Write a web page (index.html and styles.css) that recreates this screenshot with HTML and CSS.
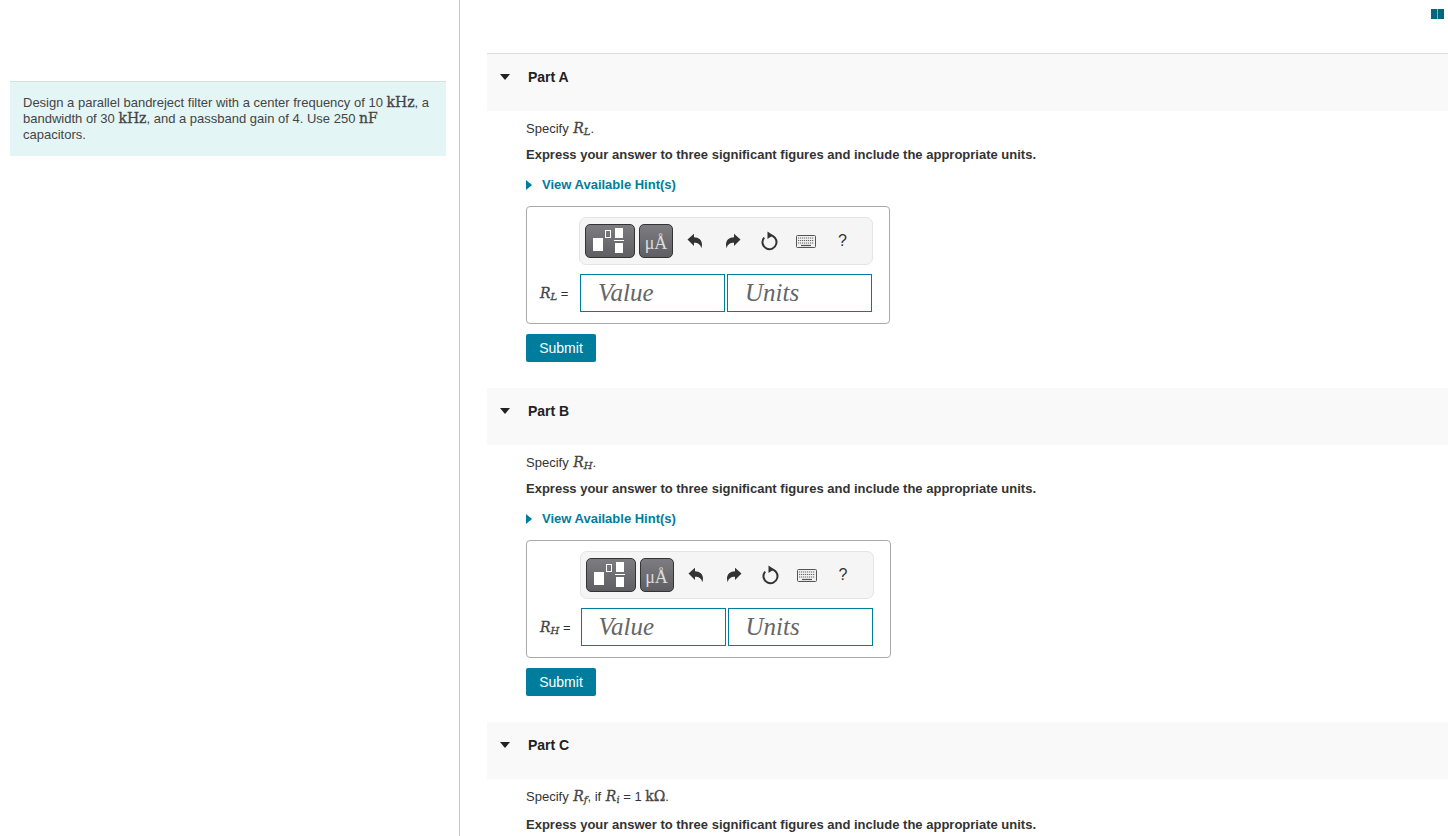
FILE: index.html
```html
<!DOCTYPE html>
<html lang="en">
<head>
  <meta charset="UTF-8" />
  <title>Parallel bandreject filter</title>
  <link rel="stylesheet" href="styles.css">
</head>
<body>
  <svg class="defs" width="0" height="0" aria-hidden="true">
    <symbol id="undo" viewBox="0 0 16 16"><path d="M.5 6.500 7 .8v3.500c4.800 0 8 2.900 8 7.500 0 1.300-.3 2.400-.8 3.400-.5-3.500-2.900-5.400-7.200-5.400v3.300z"/></symbol>
    <symbol id="redo" viewBox="0 0 16 16"><path d="M15.500 6.500 9 .8v3.500c-4.800 0-8 2.900-8 7.500 0 1.300.3 2.400.8 3.400.5-3.500 2.900-5.400 7.200-5.400v3.300z"/></symbol>
    <symbol id="reset" viewBox="0 0 18 20"><path d="M9.500 4.200a7 7 0 1 1-5.300 2.400" fill="none" stroke="currentColor" stroke-width="2"/><path d="M7.500 0.500 13 4.200 7.500 8z"/></symbol>
    <symbol id="keyboard" viewBox="0 0 20 13">
      <rect x="0.500" y="0.500" width="19" height="12" rx="1" fill="#f0f0f0" stroke="#555"/>
      <path d="M2 3h16M2 5.500h16M2 8h16" stroke="#666" stroke-width="1.200" stroke-dasharray="1.200 .8"/>
      <path d="M5 10.500h10" stroke="#555" stroke-width="1.200"/>
    </symbol>
    <symbol id="templates" viewBox="0 0 50 34">
      <rect x="8" y="14" width="10" height="13" fill="#fff"/>
      <rect x="20.500" y="6.500" width="5" height="7" fill="none" stroke="#fff"/>
      <rect x="30" y="4" width="8" height="10" fill="#fff"/>
      <rect x="29" y="16" width="10" height="1" fill="#fff"/>
      <rect x="30" y="19" width="8" height="10" fill="#fff"/>
    </symbol>
  </svg>

  <div class="page">
    <aside class="side">
      <div class="intro">
        <span class="line">Design a parallel bandreject filter with a center frequency of 10 <span class="unit">kHz</span>, a</span>
        <span class="line">bandwidth of 30 <span class="unit">kHz</span>, and a passband gain of 4. Use 250 <span class="unit">nF</span></span>
        <span class="line">capacitors.</span>
      </div>
    </aside>

    <main class="main">
      <div class="topbar">
        <svg class="book" width="13" height="10" viewBox="0 0 13 10" aria-hidden="true">
          <rect width="6" height="10" fill="#00687f"/>
          <rect x="7" width="6" height="10" fill="#00687f"/>
          <rect x="6" width="1" height="10" fill="#7fb3bf"/>
        </svg>
      </div>

      <section class="part">
        <h2 class="part-head"><span class="caret"></span>Part A</h2>
        <div class="part-body">
          <p class="prompt">Specify <span class="var">R<sub>L</sub></span>.</p>
          <p class="instr">Express your answer to three significant figures and include the appropriate units.</p>
          <p class="hint"><span class="hint-arrow"></span>View Available Hint(s)</p>
          <div class="answer">
            <div class="toolbar">
              <span class="tool tool-wide"><svg width="50" height="34"><use href="#templates"/></svg></span>
              <span class="tool tool-unit">μÅ</span>
              <svg class="ic ic-undo"><use href="#undo"/></svg>
              <svg class="ic ic-redo"><use href="#redo"/></svg>
              <svg class="ic ic-reset"><use href="#reset"/></svg>
              <svg class="ic ic-keys"><use href="#keyboard"/></svg>
              <span class="ic-help">?</span>
            </div>
            <label class="entry-label"><span class="var">R<sub>L</sub></span> =</label>
            <div class="field">Value</div>
            <div class="field">Units</div>
          </div>
          <button class="submit">Submit</button>
        </div>
      </section>

      <section class="part">
        <h2 class="part-head"><span class="caret"></span>Part B</h2>
        <div class="part-body">
          <p class="prompt">Specify <span class="var">R<sub>H</sub></span>.</p>
          <p class="instr">Express your answer to three significant figures and include the appropriate units.</p>
          <p class="hint"><span class="hint-arrow"></span>View Available Hint(s)</p>
          <div class="answer">
            <div class="toolbar">
              <span class="tool tool-wide"><svg width="50" height="34"><use href="#templates"/></svg></span>
              <span class="tool tool-unit">μÅ</span>
              <svg class="ic ic-undo"><use href="#undo"/></svg>
              <svg class="ic ic-redo"><use href="#redo"/></svg>
              <svg class="ic ic-reset"><use href="#reset"/></svg>
              <svg class="ic ic-keys"><use href="#keyboard"/></svg>
              <span class="ic-help">?</span>
            </div>
            <label class="entry-label"><span class="var">R<sub>H</sub></span> =</label>
            <div class="field">Value</div>
            <div class="field">Units</div>
          </div>
          <button class="submit">Submit</button>
        </div>
      </section>

      <section class="part part-last">
        <h2 class="part-head"><span class="caret"></span>Part C</h2>
        <div class="part-body">
          <p class="prompt">Specify <span class="var">R<sub>f</sub></span>, if <span class="var">R<sub>i</sub></span> = 1 <span class="unit">kΩ</span>.</p>
          <p class="instr">Express your answer to three significant figures and include the appropriate units.</p>
        </div>
      </section>
    </main>
  </div>
</body>
</html>
```

FILE: styles.css
```css
* { box-sizing: border-box; }
html, body { margin: 0; height: 100%; overflow: hidden; background: #fff; }
body { font-family: "Liberation Sans", Arial, sans-serif; font-size: 13px; color: #333; }
.defs { position: absolute; }

.page { display: flex; height: 836px; overflow: hidden; }
.side { width: 460px; flex: none; border-right: 1px solid #c5cbd3; padding: 81px 13px 0 10px; }
.intro { background: #e4f5f6; border-top: 1px solid #d3e0e4; padding: 13px; height: 75px; line-height: 16px; color: #444; }
.line { display: block; height: 16px; white-space: nowrap; }
.unit { font-family: "DejaVu Serif", serif; font-size: 14px; line-height: 14px; color: #444; -webkit-text-stroke: .3px #444; }
.var { font-family: "DejaVu Serif", serif; font-style: italic; font-size: 14px; color: #444; margin-left: 1px; -webkit-text-stroke: .3px #444; }
.var sub { font-size: 10px; line-height: 0; vertical-align: -2px; }

.main { flex: 1; padding-left: 27px; min-width: 0; }
.topbar { height: 54px; display: flex; justify-content: flex-end; padding: 9px 4px 0 0; border-bottom: 1px solid #ddd; }
.book { display: block; }

.part { height: 334px; }
.part-last { height: auto; }
.part-head { margin: 0; height: 57px; background: #f9f9f9; padding: 15px 0 0 13px; display: flex; align-items: flex-start; font-size: 14px; line-height: 16px; font-weight: bold; color: #222; }
.caret { width: 0; height: 0; margin: 5px 18px 0 0; border-left: 5.500px solid transparent; border-right: 5.500px solid transparent; border-top: 6px solid #222; }

.part-body { padding-left: 39px; }
.prompt { margin: 0; padding-top: 6px; height: 33px; line-height: 23px; white-space: nowrap; }
.part-last .prompt { height: 35px; }
.instr { margin: 0; height: 26px; line-height: 22px; font-weight: bold; }
.part-last .instr { height: 22px; }
.hint { margin: 0 0 7px; height: 29px; font-weight: bold; color: #007d9c; display: flex; align-items: center; }
.hint-arrow { width: 0; height: 0; margin: 0 10px 0 0; border-top: 5.500px solid transparent; border-bottom: 5.500px solid transparent; border-left: 6px solid #007d9c; }

.answer { display: inline-grid; grid-template-columns: auto 145px 145px; column-gap: 2px; align-items: center; vertical-align: top; border: 1px solid #aaa; border-radius: 4px; padding: 10px 17px 11px 12px; height: 118px; }
.toolbar { grid-column: 2 / 4; display: flex; align-items: center; margin: 0 -1px 9px; height: 48px; background: #f5f5f5; border: 1px solid #e4e4e4; border-radius: 7px; padding-left: 5px; }
.tool { display: block; height: 34px; border: 1px solid #333; border-radius: 5px; background: linear-gradient(#7d7c81, #5f5e63); color: #ddd; }
.tool-wide { width: 50px; margin-right: 4px; }
.tool-wide svg { display: block; margin: -1px; }
.tool-unit { width: 34px; font-family: "Liberation Serif", serif; font-size: 18px; line-height: 36px; text-align: center; }
.ic { width: 16px; height: 16px; fill: #333; color: #333; flex: none; }
.ic-undo { margin-left: 14px; }
.ic-redo { margin-left: 22px; }
.ic-reset { width: 18px; height: 20px; margin-left: 19px; }
.ic-keys { width: 20px; height: 13px; margin-left: 18px; }
.ic-help { margin-left: 22px; font-size: 16px; color: #333; }

.entry-label { grid-column: 1; min-width: 31px; margin-right: 8px; white-space: nowrap; }
.field { height: 38px; border: 1px solid #007d9c; padding-left: 17px; font-family: "Liberation Serif", serif; font-style: italic; font-size: 25px; line-height: 36px; color: #666; }

.submit { display: block; margin-top: 10px; width: 70px; height: 28px; padding: 0; border: none; border-radius: 2px; background: #007d9c; color: #fff; font-family: inherit; font-size: 14px; }
```
